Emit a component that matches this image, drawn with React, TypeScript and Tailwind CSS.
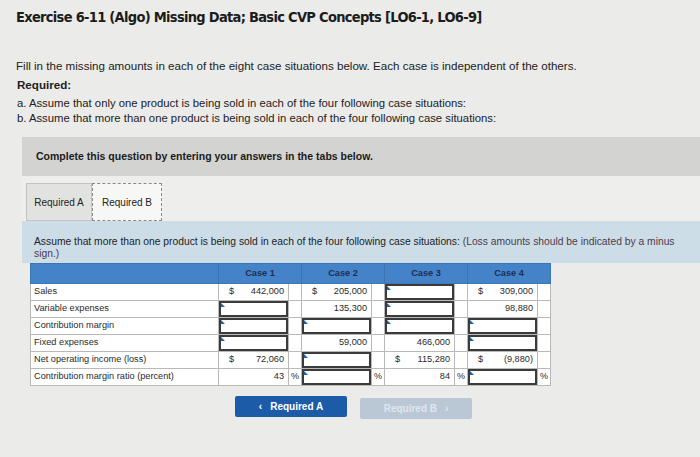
import React from "react";

type Cell =
  | { kind: "given"; dollar?: boolean; value: string; pct?: boolean }
  | { kind: "input"; pct?: boolean }
  | { kind: "blank" };

const labels = [
  "Sales",
  "Variable expenses",
  "Contribution margin",
  "Fixed expenses",
  "Net operating income (loss)",
  "Contribution margin ratio (percent)",
];

// one array per row, four cases in each
const rows: Cell[][] = [
  [
    { kind: "given", dollar: true, value: "442,000" },
    { kind: "given", dollar: true, value: "205,000" },
    { kind: "input" },
    { kind: "given", dollar: true, value: "309,000" },
  ],
  [
    { kind: "input" },
    { kind: "given", value: "135,300" },
    { kind: "input" },
    { kind: "given", value: "98,880" },
  ],
  [{ kind: "input" }, { kind: "input" }, { kind: "input" }, { kind: "input" }],
  [
    { kind: "input" },
    { kind: "given", value: "59,000" },
    { kind: "given", value: "466,000" },
    { kind: "input" },
  ],
  [
    { kind: "given", dollar: true, value: "72,060" },
    { kind: "input" },
    { kind: "given", dollar: true, value: "115,280" },
    { kind: "given", dollar: true, value: "(9,880)" },
  ],
  [
    { kind: "given", value: "43", pct: true },
    { kind: "input", pct: true },
    { kind: "given", value: "84", pct: true },
    { kind: "input", pct: true },
  ],
];

const CaseCell: React.FC<{ cell: Cell }> = ({ cell }) => {
  const pct = cell.kind !== "blank" && cell.pct;
  return (
    <>
      <td className="h-[17px] w-[70px] border border-[#b9b9b9] p-0 align-middle">
        {cell.kind === "input" ? (
          <div className="relative h-[16px] border-2 border-[#3b3b3b] bg-white">
            <span className="absolute left-0 top-0 h-0 w-0 border-l-[4px] border-t-[4px] border-l-[#1f5fb0] border-t-transparent" />
          </div>
        ) : cell.kind === "given" ? (
          <div className="flex h-[16px] items-center justify-between px-[4px]">
            <span className="pl-[6px]">{cell.dollar ? "$" : ""}</span>
            <span>{cell.value}</span>
          </div>
        ) : null}
      </td>
      <td className="h-[17px] w-[13px] border border-[#b9b9b9] p-0 text-center align-middle text-[9px]">
        {pct ? "%" : ""}
      </td>
    </>
  );
};

export default function App() {
  return (
    <div
      className="relative h-[457px] w-[700px] overflow-hidden bg-[#ebebea] text-[#222]"
      style={{ fontFamily: '"Liberation Sans", Arial, sans-serif' }}
    >
      <h1
        className="ml-[16px] pt-[6px] text-[14.5px] font-bold leading-[22px] tracking-[-0.7px] text-[#1c1c1c]"
        style={{ fontFamily: '"DejaVu Sans Condensed", "Roboto", sans-serif' }}
      >
        Exercise 6-11 (Algo) Missing Data; Basic CVP Concepts [LO6-1, LO6-9]
      </h1>

      <p className="ml-[16px] mt-[31px] text-[11.6px] leading-[14px]">
        Fill in the missing amounts in each of the eight case situations below. Each case is independent of the others.
      </p>
      <p className="ml-[17px] mt-[5px] text-[11.6px] font-bold leading-[14px]">Required:</p>
      <p className="ml-[17px] mt-[4px] text-[11.3px] leading-[15px]">
        a. Assume that only one product is being sold in each of the four following case situations:
      </p>
      <p className="ml-[17px] text-[11.3px] leading-[15px]">
        b. Assume that more than one product is being sold in each of the four following case situations:
      </p>

      <div className="ml-[22px] mt-[11px]">
        <div className="flex h-[39px] items-center bg-[#d3d3d2] pl-[14px] text-[10.5px] font-bold text-[#1b1b1b]">
          Complete this question by entering your answers in the tabs below.
        </div>

        <div className="flex h-[45px] items-end bg-[#eeeeed] pl-[4px]">
          <div className="flex h-[38px] w-[66px] items-center justify-center border border-[#c4c4c4] bg-[#e2e2e1] text-[10px]">
            Required A
          </div>
          <div className="flex h-[38px] w-[70px] items-center justify-center border border-dashed border-[#8a8a8a] bg-[#f7f7f6] text-[10px]">
            Required B
          </div>
        </div>

        <div className="h-[42px] bg-[#cddde8] pl-[12px] pr-[6px] pt-[15px] text-[10.3px] leading-[12px] text-[#222]">
          <div className="whitespace-nowrap">
            Assume that more than one product is being sold in each of the four following case situations:{" "}
            <span className="text-[#4d3b48]">(Loss amounts should be indicated by a minus</span>
          </div>
          <div className="text-[#4d3b48]">sign.)</div>
        </div>

        <table className="ml-[8px] border-collapse bg-white text-[9.2px] text-[#2a2a2a]">
          <thead>
            <tr className="h-[20px] bg-[#4583c9] text-[#1c2f55]">
              <th className="w-[188px] border border-[#3d74b3] p-0" />
              {["Case 1", "Case 2", "Case 3", "Case 4"].map((c) => (
                <th key={c} colSpan={2} className="border border-[#3d74b3] p-0 text-[9.2px] font-bold">
                  {c}
                </th>
              ))}
            </tr>
          </thead>
          <tbody>
            {rows.map((r, i) => (
              <tr key={labels[i]}>
                <td className="h-[17px] w-[188px] border border-[#b9b9b9] px-[3px] py-0">{labels[i]}</td>
                {r.map((c, j) => (
                  <CaseCell key={j} cell={c} />
                ))}
              </tr>
            ))}
          </tbody>
        </table>

        <div className="ml-[213px] mt-[10px] flex gap-[13px]">
          <button className="flex h-[21px] w-[112px] items-center justify-center gap-[8px] rounded-[2px] bg-[#1b5ba8] text-[10px] font-bold text-white">
            <span>‹</span> Required A
          </button>
          <button className="mt-[2px] flex h-[21px] w-[112px] items-center justify-center gap-[8px] rounded-[2px] bg-[#bac8d6] text-[10px] font-bold text-[#dfe6ee]">
            Required B <span>›</span>
          </button>
        </div>
      </div>
    </div>
  );
}
